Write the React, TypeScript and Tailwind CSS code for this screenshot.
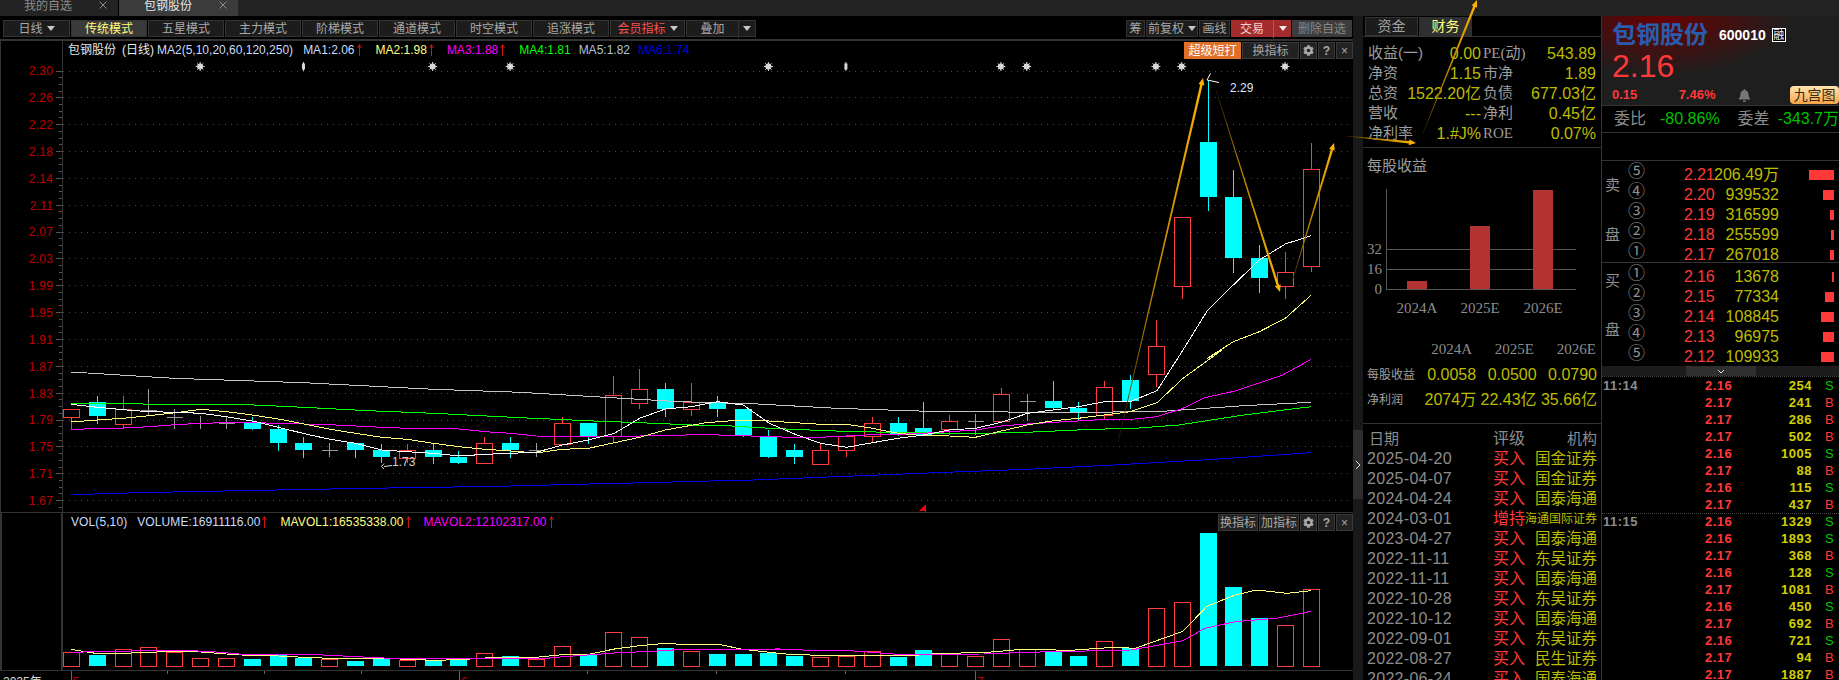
import { FaBell, FaCog } from "react-icons/fa"

const zh = "font-['Liberation_Sans','Noto_Sans_CJK_SC',sans-serif]"

const X = (i: number) => 71 + i * 25.83
// helpers: read off crops of the chart
const a = (x: number, y: number) => `${(x / 2.306).toFixed(1)},${(350 + y / 3).toFixed(1)}`
const b = (x: number, y: number) => `${(680 + x / 2.306).toFixed(1)},${(350 + y / 3).toFixed(1)}`
const c = (x: number, y: number) => `${(1050 + x / 3).toFixed(1)},${(40 + y / 3).toFixed(1)}`
const va = (x: number, y: number) => `${(x / 2.306).toFixed(1)},${(510 + y / 3).toFixed(1)}`
const vb = (x: number, y: number) => `${(680 + x / 2.306).toFixed(1)},${(510 + y / 3).toFixed(1)}`

const mapPts = (f: (x: number, y: number) => string, pts: number[][]) => pts.map(([x, y]) => f(x, y))

const grey = [
  ...mapPts(a, [[164, 66], [400, 85], [700, 98], [1000, 118], [1200, 127], [1500, 150]]),
  ...mapPts(b, [[0, 155], [180, 162], [360, 175], [600, 185], [900, 187], [1100, 185], [1300, 167], [1455, 157]]),
]
const white = [
  ...mapPts(a, [[164, 163], [224, 172], [284, 179], [344, 185], [404, 187], [464, 190], [522, 200], [582, 213], [642, 232], [702, 251], [761, 268], [820, 280], [880, 300], [939, 305], [999, 310], [1059, 318], [1119, 313], [1178, 310], [1237, 307], [1297, 285], [1357, 270], [1417, 250], [1475, 205], [1534, 177]]),
  ...mapPts(b, [[26, 170], [86, 155], [146, 165], [206, 220], [264, 252], [324, 280], [384, 292], [444, 278], [503, 265], [561, 255], [621, 240], [681, 235], [741, 217], [801, 190], [861, 180], [918, 170], [979, 155], [1038, 155], [1100, 122], [1160, 0]]),
  ...mapPts(c, [[472, 812], [550, 735], [628, 660], [706, 612], [784, 587]]),
]
const yellow = [
  ...mapPts(a, [[164, 216], [224, 210], [284, 205], [344, 197], [404, 188], [464, 178], [522, 185], [582, 195], [642, 207], [702, 222], [761, 238], [820, 250], [880, 262], [939, 268], [999, 280], [1059, 290], [1119, 298], [1178, 303], [1237, 309], [1297, 298], [1357, 295], [1417, 278], [1475, 262], [1534, 240]]),
  ...mapPts(b, [[60, 218], [120, 212], [206, 213], [264, 218], [324, 223], [384, 223], [444, 235], [503, 250], [561, 257], [621, 258], [681, 262], [741, 243], [801, 225], [861, 212], [918, 205], [979, 195], [1038, 185], [1100, 158], [1160, 85], [1250, 0]]),
  ...mapPts(c, [[472, 955], [550, 905], [628, 875], [706, 835], [784, 765]]),
]
const magenta = [
  ...mapPts(a, [[164, 238], [224, 236], [284, 234], [344, 230], [404, 224], [464, 220], [522, 218], [582, 218], [642, 220], [702, 222], [761, 224], [820, 228], [880, 232], [939, 235], [999, 235], [1059, 237], [1119, 245], [1178, 250], [1237, 258], [1297, 260], [1357, 261], [1417, 258], [1475, 258], [1534, 256]]),
  ...mapPts(b, [[60, 254], [120, 256], [206, 260], [264, 262], [324, 262], [384, 258], [444, 254], [503, 253], [561, 250], [621, 245], [681, 240], [741, 228], [801, 222], [861, 217], [918, 213], [979, 208], [1050, 207], [1100, 200], [1160, 175], [1210, 143], [1280, 123], [1390, 75], [1455, 28]]),
]
const green = [
  ...mapPts(a, [[164, 160], [400, 163], [550, 163], [700, 172], [850, 182], [1000, 190], [1200, 203], [1370, 213], [1534, 221]]),
  ...mapPts(b, [[0, 224], [120, 228], [206, 235], [300, 240], [400, 245], [500, 247], [600, 250], [700, 250], [800, 247], [950, 238], [1050, 235], [1150, 225], [1300, 195], [1455, 170]]),
]
const blue = [
  ...mapPts(a, [[164, 434], [320, 428], [550, 422], [850, 415], [1150, 409], [1330, 403], [1534, 397]]),
  ...mapPts(b, [[0, 395], [170, 390], [400, 378], [590, 368], [800, 358], [1000, 345], [1230, 328], [1455, 308]]),
]
const mavol1 = [
  ...mapPts(va, [[164, 421], [190, 427], [220, 433], [284, 433], [344, 430], [404, 427], [464, 429], [522, 435], [582, 440], [642, 441], [702, 445], [761, 448], [820, 448], [880, 448], [939, 451], [999, 454], [1059, 452], [1119, 447], [1178, 445], [1237, 445], [1297, 437], [1357, 436], [1417, 420], [1475, 410], [1534, 403]]),
  ...mapPts(vb, [[0, 406], [90, 406], [140, 420], [206, 430], [250, 436], [350, 440], [530, 440], [600, 433], [700, 431], [790, 421], [900, 424], [1000, 415], [1050, 418], [1160, 367], [1215, 292], [1280, 258], [1330, 243], [1400, 253], [1455, 245]]),
]
const mavol2 = [
  ...mapPts(va, [[164, 430], [260, 427], [400, 424], [480, 427], [560, 436], [730, 437], [850, 445], [920, 449], [1100, 449], [1250, 449], [1300, 443], [1417, 432], [1534, 425]]),
  ...mapPts(vb, [[0, 421], [230, 420], [300, 424], [400, 426], [500, 436], [700, 435], [800, 430], [1040, 423], [1160, 395], [1210, 358], [1280, 338], [1380, 327], [1455, 307]]),
]

// type, body top, body bottom, wick top, wick bottom
const candles: [string, number, number, number, number][] = [
  ["r", 409, 417, 409, 429], ["c", 402, 416, 396, 424], ["r", 409, 424, 396, 429], ["d", 410, 410, 389, 416],
  ["d", 417, 417, 409, 429], ["d", 423, 423, 416, 429], ["d", 423, 423, 416, 429], ["c", 423, 429, 417, 430],
  ["c", 429, 443, 425, 451], ["c", 443, 450, 437, 458], ["d", 450, 450, 443, 457], ["c", 443, 450, 443, 458],
  ["c", 450, 457, 444, 463], ["r", 450, 458, 444, 463], ["c", 450, 457, 444, 464], ["c", 457, 463, 451, 464],
  ["r", 443, 463, 437, 463], ["c", 443, 450, 437, 458], ["d", 450, 450, 443, 457], ["r", 423, 444, 417, 444],
  ["c", 423, 436, 423, 444], ["r", 395, 436, 376, 443], ["r", 389, 403, 369, 409], ["c", 389, 409, 383, 417],
  ["r", 402, 409, 383, 416], ["c", 403, 409, 396, 417], ["c", 409, 435, 409, 437], ["c", 436, 457, 430, 458],
  ["c", 450, 457, 444, 464], ["r", 450, 464, 444, 464], ["r", 436, 450, 436, 457], ["r", 423, 436, 417, 443],
  ["c", 423, 435, 417, 436], ["c", 428, 435, 402, 436], ["r", 421, 429, 415, 435], ["d", 421, 421, 414, 435],
  ["r", 394, 421, 388, 421], ["d", 401, 401, 394, 421], ["c", 401, 408, 381, 409], ["c", 408, 413, 402, 421],
  ["r", 387, 415, 381, 420], ["c", 380, 401, 375, 409], ["r", 346, 374, 320, 387], ["r", 217, 286, 217, 299],
  ["c", 142, 197, 80, 211], ["c", 197, 258, 170, 273], ["c", 258, 278, 245, 293], ["r", 272, 286, 252, 299],
  ["r", 169, 266, 143, 272],
]

const volTops = [430, 438, 421, 415, 430, 448, 448, 450, 437, 446, 451, 456, 448, 452, 455, 452, 433, 441, 451, 412, 437, 370, 385, 417, 427, 435, 435, 432, 441, 445, 442, 427, 444, 423, 436, 442, 391, 420, 425, 441, 397, 418, 298, 280, 72, 234, 328, 349, 241]

const starAt = [5, 14, 17, 27, 36, 37, 42, 43, 47]
const narrowAt = [9, 30]
const gridYs = Array.from({ length: 17 }, (_, i) => 71 + i * 26.85)
const prices = ["2.30", "2.26", "2.22", "2.18", "2.14", "2.11", "2.07", "2.03", "1.99", "1.95", "1.91", "1.87", "1.83", "1.79", "1.75", "1.71", "1.67"]

const Line = ({ pts, color }: { pts: string[]; color: string }) => (
  <polyline points={pts.join(" ")} fill="none" stroke={color} strokeWidth="1" shapeRendering="crispEdges" />
)

const Star = ({ x }: { x: number }) => (
  <g stroke="#d8d8d8" strokeWidth="1" fill="#d8d8d8">
    <circle cx={x} cy={66.5} r={3} stroke="none" />
    <path d={`M${x} 62V71M${x - 4.5} 66.5H${x + 4.5}M${x - 3.2} 63.3L${x + 3.2} 69.7M${x - 3.2} 69.7L${x + 3.2} 63.3`} />
  </g>
)

// tapered arrow, dim at the tail, full orange at the head
const Arrow = ({ id, from, to }: { id: string; from: number[]; to: number[] }) => {
  const [x1, y1] = from
  const [x2, y2] = to
  const len = Math.hypot(x2 - x1, y2 - y1)
  const ux = (x2 - x1) / len
  const uy = (y2 - y1) / len
  const nx = -uy
  const ny = ux
  const bx = x2 - ux * 7
  const by = y2 - uy * 7
  const poly = [
    [x1 + nx * 0.3, y1 + ny * 0.3],
    [bx + nx * 1.2, by + ny * 1.2],
    [bx + nx * 3, by + ny * 3],
    [x2, y2],
    [bx - nx * 3, by - ny * 3],
    [bx - nx * 1.2, by - ny * 1.2],
    [x1 - nx * 0.3, y1 - ny * 0.3],
  ]
    .map((p) => p.map((v) => v.toFixed(1)).join(","))
    .join(" ")
  return (
    <>
      <defs>
        <linearGradient id={id} gradientUnits="userSpaceOnUse" x1={x1} y1={y1} x2={x2} y2={y2}>
          <stop offset="0" stopColor="#2a1e00" />
          <stop offset="0.35" stopColor="#b07c00" />
          <stop offset="1" stopColor="#ffb400" />
        </linearGradient>
      </defs>
      <polygon points={poly} fill={`url(#${id})`} />
    </>
  )
}

const Tri = ({ color = "#c8c8c8" }: { color?: string }) => (
  <svg width="8" height="5" viewBox="0 0 8 5">
    <polygon points="0,0 8,0 4,5" fill={color} />
  </svg>
)

const Up = () => (
  <svg className="ml-[2px] shrink-0" width="5" height="12" viewBox="0 0 5 12">
    <path d="M2.5 12V1M0.5 4L2.5 0.5L4.5 4" fill="none" stroke="#c81414" />
  </svg>
)

const Cross = () => (
  <svg className="mt-[1px]" width="8" height="8" viewBox="0 0 8 8">
    <path d="M0.5 0.5L7.5 7.5M7.5 0.5L0.5 7.5" stroke="#8c8c8c" />
  </svg>
)

const Btn = ({ w, children, cls = "" }: { w: string; children: React.ReactNode; cls?: string }) => (
  <div className={`${w} h-[17px] flex items-center justify-center gap-1 border border-[#333] bg-[#1c1c1c] text-[12px] text-[#a8a8a8] ${cls}`}>
    {children}
  </div>
)

const ChartTools = ({ first }: { first: React.ReactNode }) => (
  <div className="flex gap-px">
    {first}
    <div className="w-[17px] h-[17px] flex items-center justify-center border border-[#3a3a3a] bg-[#222] text-[#a8a8a8]">
      <FaCog size={11} />
    </div>
    <div className="w-[17px] h-[17px] flex items-center justify-center border border-[#3a3a3a] bg-[#222] text-[12px] font-bold text-[#a8a8a8]">?</div>
    <div className="w-[17px] h-[17px] flex items-center justify-center border border-[#3a3a3a] bg-[#222] text-[12px] text-[#a8a8a8]">×</div>
  </div>
)

const finance = [
  ["收益(一)", "0.00", "PE(动)", "543.89"],
  ["净资", "1.15", "市净", "1.89"],
  ["总资", "1522.20亿", "负债", "677.03亿"],
  ["营收", "---", "净利", "0.45亿"],
  ["净利率", "1.#J%", "ROE", "0.07%"],
]

const reports = [
  ["2025-04-20", "买入", "国金证券"],
  ["2025-04-07", "买入", "国金证券"],
  ["2024-04-24", "买入", "国泰海通"],
  ["2024-03-01", "增持", "海通国际证券"],
  ["2023-04-27", "买入", "国泰海通"],
  ["2022-11-11", "买入", "东吴证券"],
  ["2022-11-11", "买入", "国泰海通"],
  ["2022-10-28", "买入", "东吴证券"],
  ["2022-10-12", "买入", "国泰海通"],
  ["2022-09-01", "买入", "东吴证券"],
  ["2022-08-27", "买入", "民生证券"],
  ["2022-06-24", "买入", "国泰海通"],
]

const sells = [
  ["⑤", "2.21", "206.49万", 25],
  ["④", "2.20", "939532", 11],
  ["③", "2.19", "316599", 4],
  ["②", "2.18", "255599", 3],
  ["①", "2.17", "267018", 4],
] as const
const buys = [
  ["①", "2.16", "13678", 2],
  ["②", "2.15", "77334", 9],
  ["③", "2.14", "108845", 13],
  ["④", "2.13", "96975", 11],
  ["⑤", "2.12", "109933", 13],
] as const

const trades = [
  ["11:14", "2.16", "254", "S"], ["", "2.17", "241", "B"], ["", "2.17", "286", "B"], ["", "2.17", "502", "B"],
  ["", "2.16", "1005", "S"], ["", "2.17", "88", "B"], ["", "2.16", "115", "S"], ["", "2.17", "437", "B"],
  ["11:15", "2.16", "1329", "S"], ["", "2.16", "1893", "S"], ["", "2.17", "368", "B"], ["", "2.16", "128", "S"],
  ["", "2.17", "1081", "B"], ["", "2.16", "450", "S"], ["", "2.17", "692", "B"], ["", "2.16", "721", "S"],
  ["", "2.17", "94", "B"], ["", "2.17", "1887", "B"],
]

const BookRow = ({ row }: { row: readonly [string, string, string, number] }) => (
  <div className="flex h-[20px] items-center text-[16px]">
    <span className="w-[15px] -mt-[6px] flex justify-center text-[17px] leading-[20px] text-[#909090]">{row[0]}</span>
    <span className="ml-[40px] w-[30px] tracking-[-0.2px] text-[#ff3838]">{row[1]}</span>
    <span className="w-[65px] text-right text-[#bcbc00]">{row[2]}</span>
    <div className="flex w-[55px] justify-end">
      <div className="h-[10px] bg-[#ff3838]" style={{ width: row[3] }} />
    </div>
  </div>
)

export default function App() {
  return (
    <div className={`relative h-[680px] w-[1839px] overflow-hidden bg-black ${zh}`}>
      {/* window tabs */}
      <div className="flex h-[16px] overflow-hidden bg-[#232323] text-[12px] leading-[12px]">
        <div className="flex w-[119px] items-start border-r border-black pl-6 text-[#8c8c8c]">
          <span>我的自选</span>
          <span className="ml-[27px]">
            <Cross />
          </span>
        </div>
        <div className="flex w-[119px] items-start bg-[#3b3b3b] pl-[25px] text-[#e8e8e8]">
          <span>包钢股份</span>
          <span className="ml-[27px]">
            <Cross />
          </span>
        </div>
      </div>

      <div className="flex h-[664px]">
        {/* main chart column */}
        <div className="flex w-[1353px] flex-col">
          <div className="flex h-[25px] items-start justify-between border-b-2 border-[#333] pl-[3px] pr-px pt-1">
            <div className="flex gap-px">
              <Btn w="w-[67px]">
                日线 <Tri />
              </Btn>
              <Btn w="w-[76px]" cls="bg-[#3a3a3a] text-[#ffff80]">
                传统模式
              </Btn>
              <Btn w="w-[76px]">五星模式</Btn>
              <Btn w="w-[76px]">主力模式</Btn>
              <Btn w="w-[76px]">阶梯模式</Btn>
              <Btn w="w-[76px]">通道模式</Btn>
              <Btn w="w-[76px]">时空模式</Btn>
              <Btn w="w-[76px]">追涨模式</Btn>
              <Btn w="w-[75px]" cls="text-[#ff5050]">
                会员指标 <Tri />
              </Btn>
              <div className="flex h-[17px] w-[70px] items-center border border-[#333] bg-[#1c1c1c] text-[12px] text-[#a8a8a8]">
                <span className="w-[52px] border-r border-[#333] text-center">叠加</span>
                <span className="flex flex-1 justify-center">
                  <Tri />
                </span>
              </div>
            </div>
            <div className="flex gap-px">
              <Btn w="w-[19px]">筹</Btn>
              <Btn w="w-[52px]">
                前复权 <Tri />
              </Btn>
              <Btn w="w-[31px]">画线</Btn>
              <div className="flex h-[17px] w-[60px] items-center bg-[#a32b2b] text-[12px] text-[#f0d0d0]">
                <span className="w-[43px] border-r border-[#c05050] text-center">交易</span>
                <span className="flex flex-1 justify-center">
                  <Tri color="#eee" />
                </span>
              </div>
              <div className="flex h-[17px] w-[60px] items-center justify-center bg-[#3c3c3c] text-[12px] text-[#888]">删除自选</div>
            </div>
          </div>

          {/* candlestick pane */}
          <div className="flex h-[472px] border-b border-[#333]">
            <div className="relative w-[63px] border-l border-r border-[#333] pl-0 pr-[9px] pt-[17px] text-[#c00000]">
              <svg className="absolute right-0 top-0" width="6" height="472" viewBox="0 41 6 472">
                {gridYs.map((y) => (
                  <g key={y} stroke="#555" shapeRendering="crispEdges">
                    <line x1="0" x2="6" y1={y} y2={y} />
                    <line x1="3" x2="6" y1={y + 6.7} y2={y + 6.7} />
                    <line x1="3" x2="6" y1={y + 13.4} y2={y + 13.4} />
                    <line x1="3" x2="6" y1={y + 20.1} y2={y + 20.1} />
                  </g>
                ))}
              </svg>
              {prices.map((p) => (
                <div key={p} className="flex h-[26.85px] items-center justify-end text-[12px] tracking-[0.2px]">
                  {p}
                </div>
              ))}
            </div>
            <div className="relative flex-1">
              <svg className="block" width="1290" height="472" viewBox="63 41 1290 472">
                {gridYs.map((y) => (
                  <line key={y} x1="63" x2="1350" y1={y} y2={y} stroke="#444" strokeDasharray="1 5" shapeRendering="crispEdges" />
                ))}
                {starAt.map((i) => (
                  <Star key={i} x={X(i)} />
                ))}
                {narrowAt.map((i) => (
                  <g key={i} fill="#d8d8d8">
                    <rect x={X(i) - 1.5} y={63.5} width={3} height={6} />
                    <rect x={X(i) - 0.5} y={62} width={1} height={9} />
                  </g>
                ))}
                {candles.map(([t, top, bot, wt, wb], i) => {
                  const x = Math.round(X(i)) + 0.5
                  const col = t === "r" ? "#ff3d3d" : t === "c" ? "#00ffff" : "#999"
                  return (
                    <g key={i} shapeRendering="crispEdges">
                      <line x1={x} x2={x} y1={wt} y2={wb} stroke={col} />
                      {t === "d" ? (
                        <line x1={x - 8} x2={x + 8} y1={top} y2={top} stroke={col} />
                      ) : t === "r" ? (
                        <rect x={x - 8} y={top + 0.5} width={16} height={bot - top} fill="#000" stroke={col} />
                      ) : (
                        <rect x={x - 8.5} y={top} width={17} height={bot - top} fill={col} />
                      )}
                    </g>
                  )
                })}
                <Line pts={grey} color="#c4c4c4" />
                <Line pts={blue} color="#0000f0" />
                <Line pts={green} color="#00ff00" />
                <Line pts={magenta} color="#ff00ff" />
                <Line pts={yellow} color="#ffff80" />
                <Line pts={white} color="#ffffff" />
                {/* high / low marks */}
                <polyline points="1210.5,73.5 1207,80 1219,82.5" fill="none" stroke="#fff" />
                <text x="1230" y="92" fontSize="12" fill="#d8e8ff" fontFamily="Liberation Sans">2.29</text>
                <polyline points="384,466.5 392,465.5" fill="none" stroke="#ddd" />
                <polyline points="384,463.5 381.5,466.5 384,469" fill="none" stroke="#ddd" />
                <text x="392" y="466" fontSize="12" fill="#d0d0d0" fontFamily="Liberation Sans">1.73</text>
                {/* red flag on the axis */}
                <polygon points="925,505 919,511 925,511" fill="#ff0000" />
                <line x1="925.5" x2="925.5" y1="505" y2="513" stroke="#ff0000" />
              </svg>

              <div className="absolute left-[5px] right-0 top-0 flex h-[18px] items-center whitespace-nowrap text-[12px]">
                <span className="text-[#e8e8e8]">包钢股份</span>
                <span className="ml-[6px] text-[#e8e8e8]">(日线)</span>
                <span className="ml-[3px] text-[#c8dcff]">MA2(5,10,20,60,120,250)</span>
                <span className="ml-[10px] text-[#c8dcff]">MA1:2.06</span>
                <Up />
                <span className="ml-[14px] text-[#ffff80]">MA2:1.98</span>
                <Up />
                <span className="ml-[13px] text-[#ff00ff]">MA3:1.88</span>
                <Up />
                <span className="ml-[14px] text-[#00ff00]">MA4:1.81</span>
                <span className="ml-[8px] text-[#b0c4d8]">MA5:1.82</span>
                <span className="ml-[8px] text-[#0000e0]">MA6:1.74</span>
              </div>
              <div className="absolute right-0 top-px">
                <ChartTools
                  first={
                    <>
                      <div className="flex h-[17px] w-[57px] items-center justify-center bg-[#e07028] text-[12px] text-white">超级短打</div>
                      <div className="flex h-[17px] w-[57px] items-center justify-center border border-[#3a3a3a] bg-[#222] text-[12px] text-[#a8a8a8]">换指标</div>
                    </>
                  }
                />
              </div>
            </div>
          </div>

          {/* volume pane */}
          <div className="flex h-[158px] border-b border-[#333]">
            <div className="w-[63px] border-l-2 border-r-2 border-[#333]" />
            <div className="relative flex-1">
              <svg className="block" width="1290" height="157" viewBox="63 514 1290 157">
                {volTops.map((top, i) => {
                  const x = Math.round(X(i)) + 0.5
                  const y = 510 + top / 3
                  const up = candles[i][0] !== "c"
                  return up ? (
                    <rect key={i} x={x - 8} y={Math.round(y) + 0.5} width={16} height={667 - Math.round(y)} fill="#000" stroke="#ff3d3d" shapeRendering="crispEdges" />
                  ) : (
                    <rect key={i} x={x - 8.5} y={y} width={17} height={667 - y} fill="#00ffff" shapeRendering="crispEdges" />
                  )
                })}
                <Line pts={mavol1} color="#ffff80" />
                <Line pts={mavol2} color="#ff00ff" />
              </svg>
              <div className="absolute left-[8px] top-0 flex h-[17px] items-center whitespace-nowrap text-[12px] tracking-[0.1px]">
                <span className="text-[#c8dcff]">VOL(5,10)</span>
                <span className="ml-[10px] text-[#c8dcff]">VOLUME:16911116.00</span>
                <Up />
                <span className="ml-[13px] text-[#ffff80]">MAVOL1:16535338.00</span>
                <Up />
                <span className="ml-[13px] text-[#ff00ff]">MAVOL2:12102317.00</span>
                <Up />
              </div>
              <div className="absolute right-0 top-px">
                <ChartTools
                  first={
                    <>
                      <div className="flex h-[17px] w-[40px] items-center justify-center border border-[#3a3a3a] bg-[#222] text-[12px] text-[#a8a8a8]">换指标</div>
                      <div className="flex h-[17px] w-[40px] items-center justify-center border border-[#3a3a3a] bg-[#222] text-[12px] text-[#a8a8a8]">加指标</div>
                    </>
                  }
                />
              </div>
            </div>
          </div>

          {/* date axis, cut off by the window */}
          <svg className="block" width="1353" height="9" viewBox="0 671 1353 9">
            {[167, 264.5, 361, 587.5, 716, 845].map((x) => (
              <line key={x} x1={x} x2={x} y1="671" y2="674" stroke="#666" shapeRendering="crispEdges" />
            ))}
            {[71, 459.5, 975].map((x) => (
              <line key={x} x1={x} x2={x} y1="671" y2="680" stroke="#666" shapeRendering="crispEdges" />
            ))}
            <text x="3" y="686" fontSize="12" fill="#ddd" fontFamily="Liberation Sans, Noto Sans CJK SC">2025年</text>
            <text x="73" y="686" fontSize="12" fill="#c00000" fontFamily="Liberation Sans">5</text>
            <text x="461" y="686" fontSize="12" fill="#c00000" fontFamily="Liberation Sans">6</text>
            <text x="977" y="686" fontSize="12" fill="#c00000" fontFamily="Liberation Sans">7</text>
          </svg>
        </div>

        {/* collapse strip */}
        <div className="flex w-[10px] flex-col bg-[#191919] pt-[414px]">
          <div className="flex h-[69px] items-center justify-center bg-[#2e2e2e]">
            <svg width="6" height="10" viewBox="0 0 6 10">
              <path d="M1 1l4 4-4 4" fill="none" stroke="#ddd" />
            </svg>
          </div>
        </div>

        {/* finance panel */}
        <div className="w-[239px] border-r border-[#333] text-[16px]">
          <div className="flex h-[21px] items-end gap-px border-b border-[#333] pl-[2px] text-[14px]">
            <div className="flex h-[19px] w-[53px] items-center justify-center border border-[#333] bg-[#1c1c1c] text-[#a0a0a0]">资金</div>
            <div className="flex h-[19px] w-[53px] items-center justify-center bg-[#2f2f2f] text-[#ffff80]">财务</div>
          </div>
          <div className="h-[111px] border-b border-[#333] pl-[5px] pr-[5px] pt-[7px]">
            {finance.map((r) => (
              <div key={r[0]} className="flex h-[20px] items-center whitespace-nowrap">
                <div className="flex w-[113px] justify-between">
                  <span className="text-[15px] text-[#9c9c9c]">{r[0]}</span>
                  <span className="text-[#bcbc00]">{r[1]}</span>
                </div>
                <div className="ml-[2px] flex flex-1 justify-between">
                  <span className="font-['Liberation_Serif','Noto_Sans_CJK_SC',serif] text-[15px] text-[#9c9c9c]">{r[2]}</span>
                  <span className="text-[#bcbc00]">{r[3]}</span>
                </div>
              </div>
            ))}
          </div>

          <div className="h-[276px] border-b border-[#333]">
            <div className="pl-[4px] pt-[9px] text-[15px] leading-[18px] text-[#9c9c9c]">每股收益</div>
            <svg className="mt-[10px] block" width="238" height="130" viewBox="1364 185 238 130">
              <g stroke="#555" shapeRendering="crispEdges">
                <line x1="1387.5" x2="1387.5" y1="189" y2="289" />
                <line x1="1387" x2="1577" y1="289.5" y2="289.5" />
                <line x1="1387" x2="1577" y1="269.5" y2="269.5" />
                <line x1="1387" x2="1577" y1="249.5" y2="249.5" />
              </g>
              <rect x="1408" y="281" width="20" height="8" fill="#b33333" />
              <rect x="1471" y="226" width="20" height="63" fill="#b33333" />
              <rect x="1534" y="190" width="20" height="99" fill="#b33333" />
              <g fill="#8c8c8c" fontSize="15" fontFamily="Liberation Serif" textAnchor="end">
                <text x="1383" y="254">32</text>
                <text x="1383" y="274">16</text>
                <text x="1383" y="294">0</text>
              </g>
              <g fill="#8c8c8c" fontSize="15" fontFamily="Liberation Serif" textAnchor="middle">
                <text x="1418" y="313">2024A</text>
                <text x="1481" y="313">2025E</text>
                <text x="1544" y="313">2026E</text>
              </g>
            </svg>
            <div className="mt-[25px] flex h-[18px] items-center justify-end pr-[5px] font-['Liberation_Serif'] text-[15px] text-[#8c8c8c]">
              <span className="w-[62px] text-right">2024A</span>
              <span className="w-[62px] text-right">2025E</span>
              <span className="w-[62px] text-right">2026E</span>
            </div>
            <div className="mt-[7px] flex h-[20px] items-center pl-[4px] pr-[4px]">
              <span className="w-[50px] text-[12px] text-[#a0a0a0]">每股收益</span>
              <span className="w-[62px] text-right text-[#bcbc00]">0.0058</span>
              <span className="w-[62px] text-right text-[#bcbc00]">0.0500</span>
              <span className="w-[62px] text-right text-[#bcbc00]">0.0790</span>
            </div>
            <div className="mt-[5px] flex h-[20px] items-center pl-[4px] pr-[4px]">
              <span className="w-[50px] text-[12px] text-[#a0a0a0]">净利润</span>
              <span className="w-[62px] text-right text-[#bcbc00]">2074万</span>
              <span className="w-[62px] text-right text-[#bcbc00]">22.43亿</span>
              <span className="w-[62px] text-right text-[#bcbc00]">35.66亿</span>
            </div>
          </div>

          <div className="pl-[4px] pr-[4px] pt-[5px]">
            <div className="flex h-[20px] items-center text-[15px] text-[#8c8c8c]">
              <span className="w-[126px] pl-[2px]">日期</span>
              <span className="w-[32px] whitespace-nowrap text-[16px]">评级</span>
              <span className="flex-1 text-right">机构</span>
            </div>
            {reports.map((r, i) => (
              <div key={i} className="flex h-[20px] items-center whitespace-nowrap">
                <span className="w-[126px] tracking-[0.3px] text-[#8c8c8c]">{r[0]}</span>
                <span className="w-[32px] text-[16px] text-[#ff3838]">{r[1]}</span>
                <span className={`flex-1 text-right text-[#bcbc00] ${r[2].length > 4 ? "text-[12px]" : "text-[15.5px]"}`}>{r[2]}</span>
              </div>
            ))}
          </div>
        </div>

        {/* quote panel */}
        <div className="w-[237px]">
          <div className="h-[90px] border-b border-[#333] bg-[#1e1e1e] bg-[radial-gradient(ellipse_130px_60px_at_25%_0%,#6a0000,#1e1e1e)] pl-[10px] pt-[7px]">
            <div className="flex h-[24px] items-center">
              <span className="text-[24px] font-bold text-[#2a5cad]">包钢股份</span>
              <span className="ml-[11px] text-[14px] font-bold text-white">600010</span>
              <span className="ml-[6px] flex h-[14px] w-[14px] items-center justify-center border border-white bg-black text-[11px] leading-none text-white">融</span>
            </div>
            <div className="mt-[2px] flex h-[34px] items-center text-[32px] text-[#ff3838]">2.16</div>
            <div className="mt-[2px] flex h-[20px] items-center text-[13px] font-bold text-[#ff3838]">
              <span className="w-[67px]">0.15</span>
              <span className="w-[60px]">7.46%</span>
              <FaBell size={13} className="text-[#777]" />
              <span className="ml-[39px] flex h-[18px] w-[49px] items-center justify-center rounded-sm bg-gradient-to-b from-[#ffe4b0] to-[#f5a545] text-[14px] font-normal text-[#3a2a10]">九宫图</span>
            </div>
          </div>
          <div className="flex h-[27px] items-center overflow-hidden whitespace-nowrap border-b border-[#333] pl-[12px] text-[16px]">
            <span className="text-[#8c8c8c]">委比</span>
            <span className="ml-[14px] text-[#00c000]">-80.86%</span>
            <span className="ml-[18px] text-[#8c8c8c]">委差</span>
            <span className="ml-[8px] text-[#00c000]">-343.7万</span>
          </div>
          <div className="h-[28px] border-b border-[#333]" />

          <div className="flex h-[102px] border-b border-[#333] pl-[3px] pt-[4px]">
            <div className="flex w-[24px] flex-col gap-[30px] pt-[10px] text-[15px] leading-[20px] text-[#909090]">
              <span>卖</span>
              <span>盘</span>
            </div>
            <div>
              {sells.map((r) => (
                <BookRow key={r[0]} row={r} />
              ))}
            </div>
          </div>
          <div className="flex h-[103px] pl-[3px] pt-[4px]">
            <div className="flex w-[24px] flex-col gap-[29px] pt-[4px] text-[15px] leading-[20px] text-[#909090]">
              <span>买</span>
              <span>盘</span>
            </div>
            <div>
              {buys.map((r) => (
                <BookRow key={r[0]} row={r} />
              ))}
            </div>
          </div>

          <div className="flex h-[10px] items-center justify-center bg-[#1c1c1c]">
            <div className="flex h-[10px] w-[70px] items-center justify-center bg-[#2f2f2f]">
              <svg width="8" height="5" viewBox="0 0 8 5">
                <path d="M1 1l3 3 3-3" fill="none" stroke="#ddd" />
              </svg>
            </div>
          </div>
          <div className="border-t border-dotted border-[#444] pt-[0px] text-[13px] font-bold tracking-[0.5px]">
            {trades.map((t, i) => (
              <div key={i} className={`flex h-[17px] items-center ${i === 8 ? "border-t border-dotted border-[#444]" : ""}`}>
                <span className="w-[103px] pl-[1px] text-[#8c8c8c]">{t[0]}</span>
                <span className="w-[40px] text-[#ff3838]">{t[1]}</span>
                <span className="w-[67px] text-right text-[#d0d000]">{t[2]}</span>
                <span className={`ml-[13px] font-normal ${t[3] === "S" ? "text-[#00c800]" : "text-[#ff3838]"}`}>{t[3]}</span>
              </div>
            ))}
          </div>
        </div>
      </div>

      {/* hand-drawn arrows over the whole window */}
      <svg className="pointer-events-none absolute left-0 top-0" width="1839" height="680" viewBox="0 0 1839 680">
        <Arrow id="a1" from={[1118, 442]} to={[1203, 78]} />
        <Arrow id="a2" from={[1216, 90]} to={[1280, 292]} />
        <Arrow id="a3" from={[1291, 285]} to={[1334, 143]} />
        <Arrow id="a4" from={[1346, 136]} to={[1416, 143]} />
        <Arrow id="a5" from={[1423, 133]} to={[1477, 0]} />
      </svg>
    </div>
  )
}
